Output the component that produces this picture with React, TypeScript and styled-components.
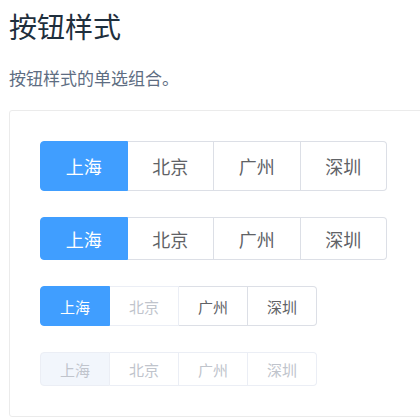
import React from "react";
import styled, { createGlobalStyle, css } from "styled-components";

type Size = "large" | "medium" | "small" | "mini";

const sizes: Record<Size, { height: number; font: number; pad: number }> = {
  large: { height: 50, font: 18, pad: 24.75 },
  medium: { height: 43, font: 18, pad: 24.75 },
  small: { height: 40, font: 15, pad: 19 },
  mini: { height: 34, font: 15, pad: 19 },
};

const GlobalStyle = createGlobalStyle`
  html, body {
    margin: 0;
    padding: 0;
    background: #fff;
    overflow: hidden;
  }
  body {
    font-family: "Noto Sans CJK SC", "Noto Sans", sans-serif;
  }
`;

const Page = styled.div`
  padding: 6px 0 0 9px;
`;

const Title = styled.h3`
  margin: 0;
  font-size: 28px;
  line-height: 40px;
  font-weight: 400;
  color: #1f2f3d;
`;

const Desc = styled.p`
  margin: 20px 0 0;
  font-size: 17px;
  line-height: 24px;
  color: #5e6d82;
`;

const Demo = styled.div`
  margin-top: 20px;
  width: 700px;
  box-sizing: border-box;
  border: 1px solid #ebebeb;
  border-radius: 3px;
  padding: 30px 30px 30px;
  display: flex;
  flex-direction: column;
  align-items: flex-start;
  gap: 26px;
`;

const Group = styled.div`
  display: inline-flex;
`;

const RadioButton = styled.span<{ $size: Size; $checked?: boolean; $disabled?: boolean }>`
  box-sizing: border-box;
  display: inline-flex;
  align-items: center;
  justify-content: center;
  height: ${(p) => sizes[p.$size].height}px;
  padding: 0 ${(p) => sizes[p.$size].pad}px;
  font-size: ${(p) => sizes[p.$size].font}px;
  color: #606266;
  background: #fff;
  border: 1px solid #dcdfe6;
  border-left: 0;
  white-space: nowrap;
  cursor: pointer;

  &:first-child {
    border-left: 1px solid #dcdfe6;
    border-radius: 4px 0 0 4px;
  }
  &:last-child {
    border-radius: 0 4px 4px 0;
  }

  ${(p) =>
    p.$checked &&
    css`
      color: #fff;
      background: #409eff;
      border-color: #409eff;
      &:first-child {
        border-left-color: #409eff;
      }
    `}

  ${(p) =>
    p.$disabled &&
    css`
      color: #c0c4cc;
      border-color: #ebeef5;
      cursor: not-allowed;
      &:first-child {
        border-left-color: #ebeef5;
      }
    `}

  ${(p) =>
    p.$disabled &&
    p.$checked &&
    css`
      background: #f2f6fc;
    `}
`;

const cities = ["上海", "北京", "广州", "深圳"];

function RadioGroup({
  size,
  value,
  disabled,
  disabledItems = [],
}: {
  size: Size;
  value: string;
  disabled?: boolean;
  disabledItems?: string[];
}) {
  return (
    <Group>
      {cities.map((c) => (
        <RadioButton
          key={c}
          $size={size}
          $checked={c === value}
          $disabled={disabled || disabledItems.includes(c)}
        >
          {c}
        </RadioButton>
      ))}
    </Group>
  );
}

export default function App() {
  return (
    <Page>
      <GlobalStyle />
      <Title>按钮样式</Title>
      <Desc>按钮样式的单选组合。</Desc>
      <Demo>
        <RadioGroup size="large" value="上海" />
        <RadioGroup size="medium" value="上海" />
        <RadioGroup size="small" value="上海" disabledItems={["北京"]} />
        <RadioGroup size="mini" value="上海" disabled />
      </Demo>
    </Page>
  );
}
